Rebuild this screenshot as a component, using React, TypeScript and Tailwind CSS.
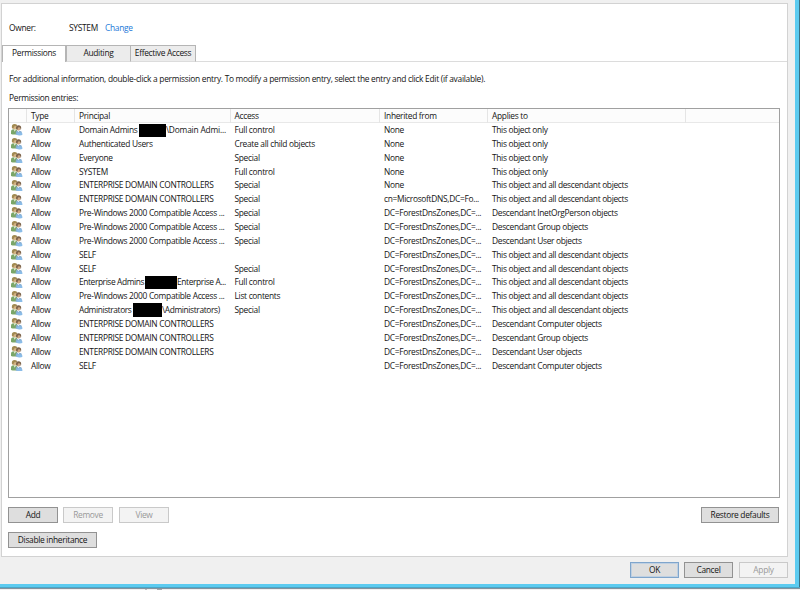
import { ReactNode } from "react";

interface Entry {
  principal: ReactNode;
  access: string;
  inherited: string;
  applies: string;
}

const FOREST = "DC=ForestDnsZones,DC=...";
const ALL = "This object and all descendant objects";
const PRE_2000 = "Pre-Windows 2000 Compatible Access ...";
const EDC = "ENTERPRISE DOMAIN CONTROLLERS";

const entries: Entry[] = [
  {
    principal: (
      <>
        <span className="w-[60px]">Domain Admins</span>
        <span className="h-[13px] w-[27px] bg-black" />
        <span className="tracking-[-0.2px]">\Domain Admi...</span>
      </>
    ),
    access: "Full control",
    inherited: "None",
    applies: "This object only",
  },
  { principal: "Authenticated Users", access: "Create all child objects", inherited: "None", applies: "This object only" },
  { principal: "Everyone", access: "Special", inherited: "None", applies: "This object only" },
  { principal: "SYSTEM", access: "Full control", inherited: "None", applies: "This object only" },
  { principal: EDC, access: "Special", inherited: "None", applies: ALL },
  { principal: EDC, access: "Special", inherited: "cn=MicrosoftDNS,DC=Fo...", applies: ALL },
  { principal: PRE_2000, access: "Special", inherited: FOREST, applies: "Descendant InetOrgPerson objects" },
  { principal: PRE_2000, access: "Special", inherited: FOREST, applies: "Descendant Group objects" },
  { principal: PRE_2000, access: "Special", inherited: FOREST, applies: "Descendant User objects" },
  { principal: "SELF", access: "", inherited: FOREST, applies: ALL },
  { principal: "SELF", access: "Special", inherited: FOREST, applies: ALL },
  {
    principal: (
      <>
        <span className="w-[66px] tracking-[-0.4px]">Enterprise Admins</span>
        <span className="h-[13px] w-[32px] bg-black" />
        <span className="tracking-[-0.36px]">Enterprise A...</span>
      </>
    ),
    access: "Full control",
    inherited: FOREST,
    applies: ALL,
  },
  { principal: PRE_2000, access: "List contents", inherited: FOREST, applies: ALL },
  {
    principal: (
      <>
        <span className="w-[54px] tracking-[-0.4px]">Administrators</span>
        <span className="h-[14px] w-[29px] bg-black" />
        <span className="tracking-[-0.36px]">\Administrators)</span>
      </>
    ),
    access: "Special",
    inherited: FOREST,
    applies: ALL,
  },
  { principal: EDC, access: "", inherited: FOREST, applies: "Descendant Computer objects" },
  { principal: EDC, access: "", inherited: FOREST, applies: "Descendant Group objects" },
  { principal: EDC, access: "", inherited: FOREST, applies: "Descendant User objects" },
  { principal: "SELF", access: "", inherited: FOREST, applies: "Descendant Computer objects" },
];

function GroupIcon() {
  return (
    <svg viewBox="0 0 22 22" className="h-[11.5px] w-[11.5px]">
      <path d="M0 19v-4q0-5 5-5h3q4 0 4 4v5q-6 2-12 0z" fill="#7aa668" />
      <path d="M5 10l2 5 3-5z" fill="#e4ead8" />
      <circle cx="6.500" cy="5.500" r="4.500" fill="#d3b383" />
      <path d="M1.500 6q0-6 5.500-6 5 0 5 4-4-1-6 1-1 1-1 3-3 1-3.500-2z" fill="#a18a52" />
      <path d="M9 20v-3q0-4 4-4h3q5 0 5 4v3q-6 2-12 0z" fill="#86aed2" />
      <path d="M12 12l2 4 3-4z" fill="#eef5fb" />
      <circle cx="14" cy="8.500" r="4" fill="#cda581" />
      <path d="M9.500 8q0-5.500 5-5.500 5 0 5 5 0 3-1 4 0-5-3-6-3 0-3 5-3 0-3-2.500z" fill="#7d6349" />
      <path d="M11 20q0-4 5-4 6 0 6 4-1 2-5.500 2T11 20z" fill="#8abce8" />
    </svg>
  );
}

interface ButtonProps {
  children: string;
  className: string;
  disabled?: boolean;
  primary?: boolean;
}

function Button({ children, className, disabled, primary }: ButtonProps) {
  const tone = disabled
    ? "border-[#c9c9c9] bg-[#f3f3f3] text-[#999999]"
    : primary
      ? "border-[#7fa5cc] bg-[#dedede] shadow-[inset_0_0_0_1px_#bfd0e2]"
      : "border-[#929292] bg-[#dedede]";
  return (
    <button
      disabled={disabled}
      className={`flex h-4 items-center justify-center border pb-px ${tone} ${className}`}
    >
      {children}
    </button>
  );
}

const columns = "grid grid-cols-[18px_48px_156px_149px_108px_198px_1fr]";

export default function App() {
  return (
    <div className="flex h-[590px] w-[800px] flex-col overflow-hidden bg-[#f0f0f0] font-['Open_Sans',sans-serif] text-[8.4px] leading-[14px] tracking-[-0.3px] whitespace-nowrap text-[#141414]">
      <div className="flex h-[584px] border-r border-[#3d7184]">
        <div className="flex w-[795px] flex-col pt-[3px] pl-px">
          <div className="h-[554px] w-[787px] border border-[#d2d2d2] bg-white">
            <div className="flex h-[41px] pt-[17px] pl-[7px]">
              <span className="w-[60px]">Owner:</span>
              <span className="w-9">SYSTEM</span>
              <a className="text-[#1d79d8]">Change</a>
            </div>

            <div className="flex h-[17px] text-center">
              <div className="w-16 border border-b-0 border-[#b5b5b5] bg-white">Permissions</div>
              <div className="w-[65px] border border-[#b5b5b5] border-b-[#dcdcdc] bg-[#ececec]">Auditing</div>
              <div className="w-[65px] border border-l-0 border-[#b5b5b5] border-b-[#dcdcdc] bg-[#ececec]">Effective Access</div>
              <div className="flex-1 border-b border-[#dcdcdc]" />
            </div>

            <div className="px-[6px] pt-[10px]">
              <p className="pl-px tracking-[-0.28px]">
                For additional information, double-click a permission entry. To modify a permission entry, select the
                entry and click Edit (if available).
              </p>
              <p className="mt-[5px] pl-px">Permission entries:</p>

              <div className="mt-[3px] h-[390px] w-[772px] border border-[#a0a0a0]">
                <div className={`${columns} h-[14px] border-b border-[#e8e8e8] bg-[#fcfcfc]`}>
                  <span className="border-r border-[#e5e5e5]" />
                  <span className="border-r border-[#e5e5e5] pl-1">Type</span>
                  <span className="border-r border-[#e5e5e5] pl-1">Principal</span>
                  <span className="border-r border-[#e5e5e5] pl-[3.5px]">Access</span>
                  <span className="border-r border-[#e5e5e5] pl-1">Inherited from</span>
                  <span className="border-r border-[#e5e5e5] pl-1">Applies to</span>
                </div>
                {entries.map((entry, i) => (
                  <div key={i} className={`${columns} h-[13.86px] items-center`}>
                    <span className="pl-0.5">
                      <GroupIcon />
                    </span>
                    <span className="pl-1">Allow</span>
                    <span className="flex items-center pl-1">{entry.principal}</span>
                    <span className="pl-[3.5px]">{entry.access}</span>
                    <span className="pl-1">{entry.inherited}</span>
                    <span className="pl-1 tracking-[-0.32px]">{entry.applies}</span>
                  </div>
                ))}
              </div>

              <div className="mt-[9px] flex w-[771px]">
                <Button className="w-[50px]">Add</Button>
                <Button className="ml-[5px] w-[50px]" disabled>Remove</Button>
                <Button className="ml-[6px] w-[50px]" disabled>View</Button>
                <Button className="ml-auto w-[78px]">Restore defaults</Button>
              </div>
              <Button className="mt-[9px] w-[89px]">Disable inheritance</Button>
            </div>
          </div>

          <div className="mt-[5px] flex justify-end pr-[7px]">
            <Button className="w-[49px]" primary>OK</Button>
            <Button className="ml-[5px] w-[49px]">Cancel</Button>
            <Button className="ml-[6px] w-[49px]" disabled>Apply</Button>
          </div>
        </div>
        <div className="flex-1 bg-[#5ccbf0]" />
      </div>
      <div className="h-[3px] border-r border-[#3d7184] bg-[#5ccbf0]" />
      <div className="h-px bg-[#4aa6c6]" />
      <div className="h-px bg-[#84939f]" />
      <div className="flex flex-1 bg-[#f0f0f0] pl-[145px]">
        <span className="w-0.5 bg-[#b8bcc0]" />
        <span className="ml-[10px] w-[5px] bg-[#a3a7ab]" />
      </div>
    </div>
  );
}
